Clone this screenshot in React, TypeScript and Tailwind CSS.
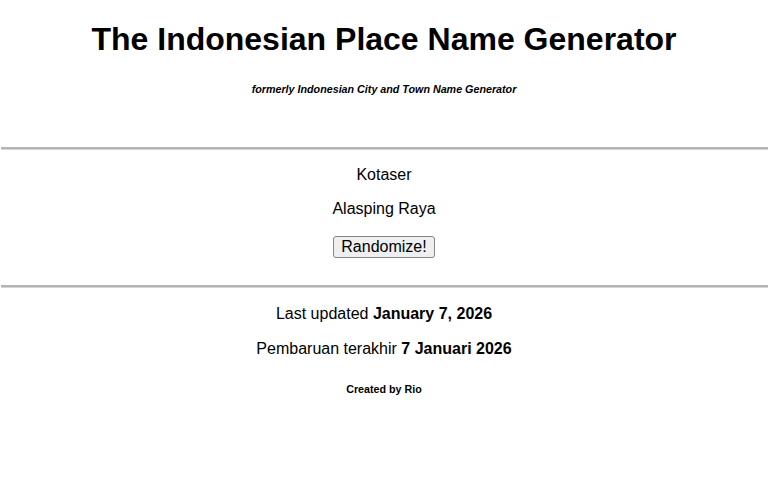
const names = { first: "Kotaser", second: "Alasping Raya" };

export default function App() {
    return (
        <div className="min-h-[480px] bg-white text-center font-['Liberation_Sans',Arial,sans-serif] text-black">
            <h1 className="mt-[21px] text-[32px] font-bold leading-[37px]">The Indonesian Place Name Generator</h1>
            <h6 className="mt-[25px] text-[10.72px] font-bold italic leading-[12px]">
                formerly Indonesian City and Town Name Generator
            </h6>

            <div className="mt-[52px] ml-[1px] h-[3px] border-t-2 border-b border-t-[#b4b4b4] border-b-[#d4d4d4]" />

            {/* Generated names */}
            <p className="mt-[16px] text-base leading-[18px]">{names.first}</p>
            <p className="mt-[16px] text-base leading-[18px]">{names.second}</p>
            <div className="mt-[18px] flex justify-center">
                <button
                    type="button"
                    className="h-[22px] rounded-[3px] border border-[#858585] bg-[#efefef] px-[7px] text-base leading-[18px] hover:bg-[#e5e5e5]"
                >
                    Randomize!
                </button>
            </div>

            <div className="mt-[27px] ml-[1px] h-[3px] border-t-2 border-b border-t-[#b4b4b4] border-b-[#d4d4d4]" />

            {/* Footer */}
            <p className="mt-[17px] text-base leading-[18px]">
                Last updated <b>January 7, 2026</b>
            </p>
            <p className="mt-[17px] text-base leading-[18px]">
                Pembaruan terakhir <b>7 Januari 2026</b>
            </p>
            <h6 className="mt-[25px] text-[10.72px] font-bold leading-[12px]">Created by Rio</h6>
        </div>
    );
}
